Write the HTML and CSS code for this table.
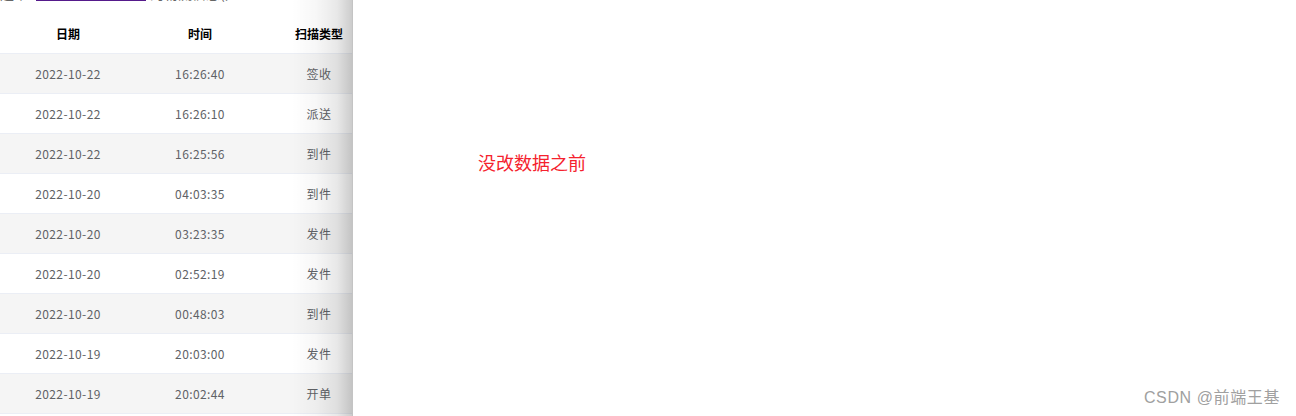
FILE: index.html
```html
<!DOCTYPE html>
<html lang="zh">
<head>
<meta charset="utf-8">
<link rel="stylesheet" href="styles.css">
</head>
<body>
<div class="page">
  <section class="left">
    <div class="cut-line">
      <span class="muted lead">运单:</span>
      <a class="link" href="#">SF1234567890123</a>
      <span class="muted tail">的物流信息(共9条)</span>
      <span class="info">●</span>
    </div>
    <div class="table">
      <div class="row head"><div>日期</div><div>时间</div><div>扫描类型</div></div>
      <div class="row odd"><div>2022-10-22</div><div>16:26:40</div><div>签收</div></div>
      <div class="row"><div>2022-10-22</div><div>16:26:10</div><div>派送</div></div>
      <div class="row odd"><div>2022-10-22</div><div>16:25:56</div><div>到件</div></div>
      <div class="row"><div>2022-10-20</div><div>04:03:35</div><div>到件</div></div>
      <div class="row odd"><div>2022-10-20</div><div>03:23:35</div><div>发件</div></div>
      <div class="row"><div>2022-10-20</div><div>02:52:19</div><div>发件</div></div>
      <div class="row odd"><div>2022-10-20</div><div>00:48:03</div><div>到件</div></div>
      <div class="row"><div>2022-10-19</div><div>20:03:00</div><div>发件</div></div>
      <div class="row odd"><div>2022-10-19</div><div>20:02:44</div><div>开单</div></div>
      <div class="row"><div>2022-10-19</div><div>20:01:12</div><div>开单</div></div>
    </div>
  </section>
  <section class="right">
    <p class="note">没改数据之前</p>
    <div class="watermark">CSDN @前端王基</div>
  </section>
</div>
</body>
</html>
```
FILE: styles.css
```css
html, body {
  margin: 0;
  padding: 0;
  background: #fff;
  height: 416px;
  overflow: hidden;
}
body {
  font-family: "Microsoft YaHei", "Noto Sans CJK SC", "Noto Sans", sans-serif;
}
.page {
  display: flex;
  height: 416px;
}
.left {
  width: 352px;
  flex: none;
  overflow: hidden;
  position: relative;
}
.left::after {
  content: "";
  position: absolute;
  top: 0;
  right: 0;
  bottom: 0;
  width: 60px;
  background: linear-gradient(to right, rgba(0,0,0,0) 0%, rgba(0,0,0,0.03) 40%, rgba(0,0,0,0.09) 75%, rgba(0,0,0,0.2) 100%);
  pointer-events: none;
}
.cut-line {
  height: 20px;
  margin-top: -17px;
  margin-bottom: -3px;
  font-size: 14px;
  line-height: 20px;
  white-space: nowrap;
  display: flex;
  align-items: flex-end;
  overflow: hidden;
}
.muted { color: #666; }
.lead { width: 36px; overflow: hidden; }
.tail { width: 84px; margin-left: 4px; overflow: hidden; }
.link {
  color: #551a8b;
  text-decoration: underline;
  display: inline-block;
  width: 110px;
  overflow: hidden;
}
.info { color: #409eff; font-size: 10px; margin-left: 2px; }
.table {
  width: 374px;
  font-size: 12px;
  color: #606266;
}
.row {
  display: grid;
  grid-template-columns: 136px 128px 110px;
  height: 40px;
  border-bottom: 1px solid #ebeef5;
  box-sizing: border-box;
  letter-spacing: 0.4px;
}
.row > div {
  display: flex;
  align-items: center;
  justify-content: center;
}
.row.head {
  height: 54px;
  padding-top: 13px;
  color: #000;
  font-weight: bold;
  letter-spacing: 0;
}
.row.odd { background: #f5f5f5; }
.right {
  flex: 1;
  border-left: 1px solid #c4c4c4;
  position: relative;
  padding-left: 125px;
}
.note {
  margin: 149px 0 0;
  color: #f5222d;
  font-size: 18px;
  line-height: 26px;
}
.watermark {
  position: absolute;
  right: 16px;
  bottom: 9px;
  color: #a0a0a0;
  font-family: "Liberation Sans", "Noto Sans CJK SC", sans-serif;
  font-size: 16px;
  line-height: 18px;
  letter-spacing: 0.6px;
}
```
